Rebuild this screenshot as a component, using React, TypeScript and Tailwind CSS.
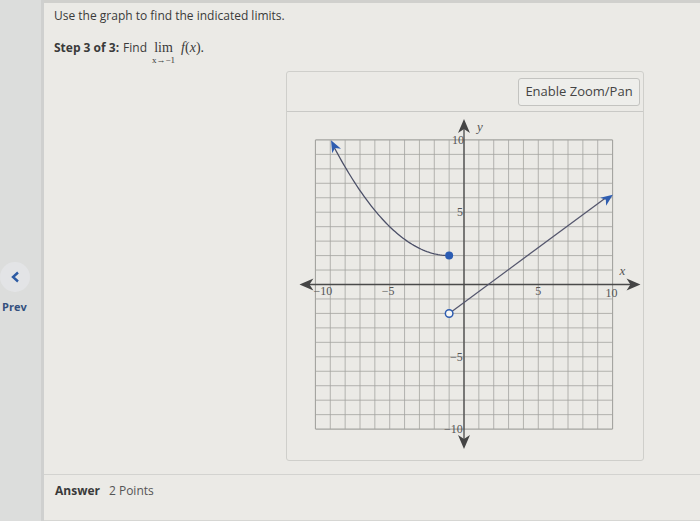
import React from 'react';

const X = (x: number) => 177 + 14.9 * x;
const Y = (y: number) => 173 - 14.5 * y;

// arrowhead polygon from tip + direction (pixel space)
function arrowHead(tx: number, ty: number, dx: number, dy: number, len = 12, w = 5) {
  const m = Math.hypot(dx, dy);
  const ux = dx / m;
  const uy = dy / m;
  const bx = tx - ux * len;
  const by = ty - uy * len;
  const nx = tx - ux * len * 0.72;
  const ny = ty - uy * len * 0.72;
  const px = -uy * w;
  const py = ux * w;
  return `${tx},${ty} ${bx + px},${by + py} ${nx},${ny} ${bx - px},${by - py}`;
}

const f = (x: number) => 2 + ((x + 1) * (x + 1)) / 8;

const Graph: React.FC = () => {
  const ticks = Array.from({ length: 21 }, (_, i) => i - 10);

  const pts: string[] = [];
  for (let x = -8.75; x <= -1.0001; x += 0.125) pts.push(`${X(x)},${Y(f(x))}`);
  pts.push(`${X(-1)},${Y(2)}`);
  const curve = 'M' + pts.join(' L');

  const lx0 = -1;
  const lx1 = 9.95;
  const g = (x: number) => 0.75 * (x + 1) - 2;

  return (
    <svg width="355" height="349" viewBox="0 0 355 349" className="block">
      {ticks.map((t) => (
        <line key={'v' + t} x1={X(t)} y1={Y(10)} x2={X(t)} y2={Y(-10)} stroke="#a3a39f" strokeWidth={t === -10 || t === 10 ? 1.1 : 0.8} />
      ))}
      {ticks.map((t) => (
        <line key={'h' + t} x1={X(-10)} y1={Y(t)} x2={X(10)} y2={Y(t)} stroke="#a3a39f" strokeWidth={t === -10 || t === 10 ? 1.1 : 0.8} />
      ))}

      {/* axes */}
      <line x1={16} y1={Y(0)} x2={350} y2={Y(0)} stroke="#4a4a4a" strokeWidth={1.3} />
      <line x1={X(0)} y1={12} x2={X(0)} y2={334} stroke="#4a4a4a" strokeWidth={1.3} />
      <polygon points={arrowHead(12, Y(0), -1, 0, 14, 6)} fill="#454545" />
      <polygon points={arrowHead(354, Y(0), 1, 0, 14, 6)} fill="#454545" />
      <polygon points={arrowHead(X(0), 7, 0, -1, 14, 6)} fill="#454545" />
      <polygon points={arrowHead(X(0), 338, 0, 1, 14, 6)} fill="#454545" />

      <g fontFamily='"Liberation Serif", serif' fontSize="12" fill="#555">
        <text x={X(-10) - 2} y={Y(0) + 11}>−10</text>
        <text x={X(-5) - 8} y={Y(0) + 11}>−5</text>
        <text x={X(5) - 3} y={Y(0) + 11}>5</text>
        <text x={X(10) - 7} y={Y(0) + 13}>10</text>
        <text x={X(0) - 12} y={Y(10) + 4}>10</text>
        <text x={X(0) - 7} y={Y(5) + 4}>5</text>
        <text x={X(0) - 14} y={Y(-5) + 4}>−5</text>
        <text x={X(0) - 20} y={Y(-10) + 4}>−10</text>
        <text x={X(0) + 13} y={19} fontStyle="italic" fontSize="13">y</text>
        <text x={333} y={Y(0) - 10} fontStyle="italic" fontSize="13">x</text>
      </g>

      {/* left piece */}
      <path d={curve} fill="none" stroke="#4c5068" strokeWidth={1.3} />
      <polygon
        points={arrowHead(X(-8.95), Y(f(-8.95)) - 1, -1, -1.95 * 14.5 / 14.9, 12, 5)}
        fill="#2f5db0"
      />
      <circle cx={X(-1)} cy={Y(2)} r={4} fill="#2b5cb3" />

      {/* right piece */}
      <line x1={X(lx0)} y1={Y(g(lx0))} x2={X(lx1) - 6} y2={Y(g(lx1)) + 3} stroke="#55576e" strokeWidth={1.3} />
      <polygon points={arrowHead(X(lx1) + 1, Y(g(lx1)), 14.9, -0.75 * 14.5, 12, 5)} fill="#2f5db0" />
      <circle cx={X(-1)} cy={Y(-2)} r={3.8} fill="#f7f7f5" stroke="#2f5db0" strokeWidth={1.5} />
    </svg>
  );
};

export default function App() {
  return (
    <div
      className="flex h-[521px] w-[700px] overflow-hidden bg-[#ebeae6] text-[#3a3a3a]"
      style={{ fontFamily: '"Open Sans", "Noto Sans", sans-serif' }}
    >
      {/* sidebar */}
      <div className="flex w-[44px] shrink-0 flex-col items-start border-r-[3px] border-[#cfd0cf] bg-[#dcdddc] pt-[262px]">
        <div className="flex h-[30px] w-[30px] items-center justify-center rounded-full bg-[#e3e4e6]">
          <svg width="10" height="12" viewBox="0 0 10 12">
            <path d="M8 1.5 L3 6 L8 10.5" fill="none" stroke="#2c5aa3" strokeWidth="2.4" />
          </svg>
        </div>
        <div className="ml-[2px] mt-[7px] text-[11px] font-bold text-[#34507e]">Prev</div>
      </div>

      {/* main */}
      <div className="flex flex-1 flex-col border-t-[3px] border-[#d0d0cd]">
        <div className="pl-[10px] pt-[5px] text-[12px] leading-[16px]">Use the graph to find the indicated limits.</div>
        <div className="flex items-start pl-[10px] pt-[16px] text-[12px] leading-[16px]">
          <span className="font-bold">Step 3 of 3:</span>
          <span className="ml-[4px]">Find</span>
          <span className="ml-[5px] inline-flex flex-col items-center" style={{ fontFamily: '"Liberation Serif", serif' }}>
            <span className="text-[14px] leading-[16px]">lim</span>
            <span className="mt-[-1px] text-[9px] leading-[10px]">x→−1</span>
          </span>
          <span className="ml-[6px] text-[14px] leading-[16px]" style={{ fontFamily: '"Liberation Serif", serif' }}>
            <i>f</i>(<i>x</i>).
          </span>
        </div>

        {/* graph panel */}
        <div className="ml-[242px] mt-[6px] flex h-[390px] w-[358px] flex-col rounded-[3px] border border-[#cfcfcb]">
          <div className="flex h-[40px] shrink-0 items-start justify-end border-b border-[#c9c9c6] pr-[3px] pt-[6px]">
            <div className="flex h-[28px] w-[122px] items-center justify-center rounded-[3px] border border-[#c3c3c0] bg-[#eeeeeb] text-[13px] text-[#444]">
              Enable Zoom/Pan
            </div>
          </div>
          <Graph />
        </div>

        <div className="mt-[13px] flex h-[47px] items-start border-t border-[#d3d3d0] pl-[11px] pt-[7px] text-[12px]">
          <span className="font-bold">Answer</span>
          <span className="ml-[9px] text-[#555]">2 Points</span>
        </div>
        <div className="flex-1 border-t border-[#d6d6d3]" />
      </div>
    </div>
  );
}
